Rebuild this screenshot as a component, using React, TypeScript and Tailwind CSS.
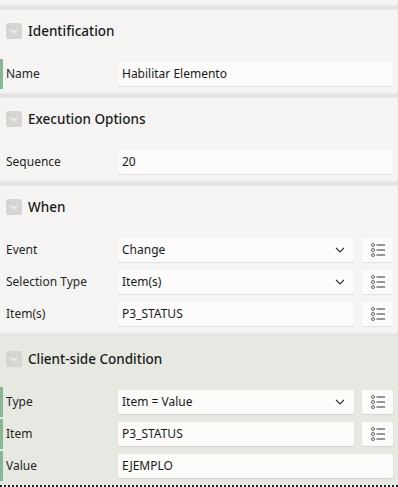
import React from "react";

const font = { fontFamily: '"Segoe UI", "Noto Sans", "Open Sans", sans-serif' };

function ChevronBox() {
  return (
    <div className="w-4 h-4 rounded-[2px] bg-[#d6d5d2] flex items-center justify-center">
      <svg width="10" height="10" viewBox="0 0 10 10">
        <path d="M2 3.5 L5 6.5 L8 3.5" fill="none" stroke="#f4f3f1" strokeWidth="1.3" />
      </svg>
    </div>
  );
}

function ListIcon() {
  return (
    <svg width="16" height="16" viewBox="0 0 16 16">
      <circle cx="3" cy="3" r="1.5" fill="none" stroke="#555" strokeWidth="0.9" />
      <circle cx="3" cy="8" r="1.5" fill="none" stroke="#555" strokeWidth="0.9" />
      <circle cx="3" cy="13" r="1.5" fill="none" stroke="#555" strokeWidth="0.9" />
      <path d="M6.5 3 H15 M6.5 8 H15 M6.5 13 H15" stroke="#333" strokeWidth="1" />
    </svg>
  );
}

function DropChevron() {
  return (
    <svg width="12" height="12" viewBox="0 0 12 12">
      <path d="M2 4 L6 8 L10 4" fill="none" stroke="#333" strokeWidth="1.2" />
    </svg>
  );
}

type Row = { label: string; value: string; select?: boolean; list?: boolean; bar?: boolean };

function FieldRow({ r }: { r: Row }) {
  return (
    <div className="flex h-8 items-center relative">
      {r.bar && <div className="absolute left-0 top-[1px] bottom-[1px] w-[3px] bg-[#8bb597]" />}
      <div className="w-[118px] pl-[6px] text-[12px] text-[#262626]">{r.label}</div>
      <div className="flex-1 flex items-center gap-2 pr-[5px]">
        <div className="flex-1 h-6 bg-[#fcfbfa] rounded-[2px] shadow-[0_1px_1px_rgba(0,0,0,0.08)] flex items-center pl-[4px] pr-[8px] text-[12px] text-[#1a1a1a]">
          <span className="flex-1">{r.value}</span>
          {r.select && <DropChevron />}
        </div>
        {r.list && (
          <div className="w-[31px] h-6 bg-[#fcfbfa] rounded-[2px] shadow-[0_1px_1px_rgba(0,0,0,0.08)] flex items-center justify-center">
            <ListIcon />
          </div>
        )}
      </div>
    </div>
  );
}

function Section({ title, rows, green }: { title: string; rows: Row[]; green?: boolean }) {
  return (
    <div className={green ? "bg-[#e6e8e2] pb-[3px]" : "bg-[#f5f4f2] pb-[3px]"}>
      <div className="h-[42px] flex items-center pl-[6px] gap-[6px]">
        <ChevronBox />
        <span className="text-[13.5px] font-medium text-[#1a1a1a]">{title}</span>
      </div>
      <div className="mt-[6px]">
        {rows.map((r) => (
          <FieldRow key={r.label} r={r} />
        ))}
      </div>
    </div>
  );
}

function Sep() {
  return <div className="h-[5px] bg-[#e4e3e0] border-y border-[#ebeae8]" />;
}

export default function App() {
  return (
    <div className="w-[398px] h-[487px] bg-[#f5f4f2] overflow-hidden" style={font}>
      <div className="h-[5px] bg-[#f5f4f2]" />
      <Sep />
      <Section title="Identification" rows={[{ label: "Name", value: "Habilitar Elemento", bar: true }]} />
      <Sep />
      <Section title="Execution Options" rows={[{ label: "Sequence", value: "20" }]} />
      <Sep />
      <Section
        title="When"
        rows={[
          { label: "Event", value: "Change", select: true, list: true },
          { label: "Selection Type", value: "Item(s)", select: true, list: true },
          { label: "Item(s)", value: "P3_STATUS", list: true },
        ]}
      />
      <Sep />
      <Section
        green
        title="Client-side Condition"
        rows={[
          { label: "Type", value: "Item = Value", select: true, list: true, bar: true },
          { label: "Item", value: "P3_STATUS", list: true, bar: true },
          { label: "Value", value: "EJEMPLO", bar: true },
        ]}
      />
      <div className="border-t-2 border-dotted border-[#222]" />
    </div>
  );
}
